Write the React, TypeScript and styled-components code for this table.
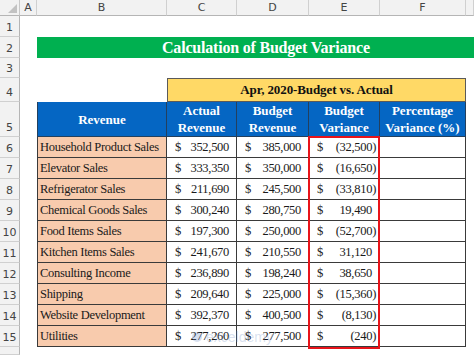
import React from 'react';
import styled, { createGlobalStyle } from 'styled-components';

const GlobalStyle = createGlobalStyle`
    html, body {
        margin: 0;
        padding: 0;
        background: #fff;
    }
`;

const Sheet = styled.div`
    width: 474px;
    height: 355px;
    overflow: hidden;
    display: grid;
    grid-template-columns: 20px 17px 130px 70px 72px 71px 86px 1fr;
    grid-template-rows: 16px 21px 21px 20px 24px 35px repeat(10, 21px) 1fr;
    background: #fff;
    font-family: "Liberation Serif", "Times New Roman", serif;
    color: #1a1a1a;
`;

const Corner = styled.div`
    grid-column: 1;
    grid-row: 1;
    background: #f2f2f2;
    border-right: 1px solid #c8c8c8;
    border-bottom: 1px solid #b5b5b5;
    box-sizing: border-box;
    display: flex;
    align-items: flex-end;
    justify-content: flex-end;
    padding: 0 2px 2px 0;

    &::after {
        content: '';
        width: 0;
        height: 0;
        border-left: 9px solid transparent;
        border-bottom: 9px solid #c2c2c2;
    }
`;

const ColHead = styled.div<{ $col: number }>`
    grid-column: ${p => p.$col};
    grid-row: 1;
    background: #f2f2f2;
    border-right: 1px solid #d0d0d0;
    border-bottom: 1px solid #b5b5b5;
    box-sizing: border-box;
    display: flex;
    align-items: center;
    justify-content: center;
    font-family: "DejaVu Sans", "Liberation Sans", sans-serif;
    font-size: 11px;
    color: #444;
`;

const RowHead = styled.div<{ $row: number }>`
    grid-column: 1;
    grid-row: ${p => p.$row};
    background: #f2f2f2;
    border-right: 1px solid #b5b5b5;
    border-bottom: 1px solid #d0d0d0;
    box-sizing: border-box;
    display: flex;
    align-items: flex-end;
    justify-content: center;
    padding-bottom: 2px;
    font-family: "DejaVu Sans", "Liberation Sans", sans-serif;
    font-size: 11px;
    color: #444;
`;

const TitleBar = styled.div`
    grid-column: 3 / 9;
    grid-row: 3;
    background: #00b050;
    display: flex;
    align-items: center;
    padding-left: 125px;
    font-weight: bold;
    font-size: 16px;
    letter-spacing: -0.2px;
    color: #fff;
    white-space: nowrap;
`;

const Period = styled.div`
    grid-column: 4 / 8;
    grid-row: 5;
    background: #ffd966;
    border: 1px solid #5a5a5a;
    box-sizing: border-box;
    display: flex;
    align-items: center;
    justify-content: center;
    font-weight: bold;
    font-size: 13px;
    letter-spacing: -0.1px;
    color: #111;
`;

const HeadCell = styled.div<{ $col: number }>`
    grid-column: ${p => p.$col};
    grid-row: 6;
    background: #0566c3;
    border-right: 1px solid #23405e;
    border-bottom: 1px solid #23405e;
    border-left: ${p => (p.$col === 3 ? '1px solid #23405e' : 'none')};
    box-sizing: border-box;
    display: flex;
    align-items: center;
    justify-content: center;
    text-align: center;
    font-weight: bold;
    font-size: 13px;
    line-height: 17px;
    color: #fff;
`;

const NameCell = styled.div<{ $row: number }>`
    grid-column: 3;
    grid-row: ${p => p.$row};
    background: #f8cbad;
    border-left: 1px solid #3a3a3a;
    border-right: 1px solid #3a3a3a;
    border-bottom: 1px solid #3a3a3a;
    box-sizing: border-box;
    display: flex;
    align-items: center;
    padding-left: 2px;
    font-size: 12.5px;
    letter-spacing: -0.3px;
    white-space: nowrap;
`;

const MoneyCell = styled.div<{ $row: number; $col: number }>`
    grid-column: ${p => p.$col};
    grid-row: ${p => p.$row};
    background: #fff;
    border-right: 1px solid #3a3a3a;
    border-bottom: 1px solid #3a3a3a;
    box-sizing: border-box;
    display: flex;
    align-items: center;
    justify-content: space-between;
    padding: 0 3px 0 8px;
    font-size: 12.5px;
    letter-spacing: -0.3px;
    white-space: nowrap;
`;

const Amount = styled.span<{ $neg: boolean }>`
    padding-right: ${p => (p.$neg ? '0' : '4px')};
`;

const Highlight = styled.div`
    grid-column: 6;
    grid-row: 7 / 17;
    margin: -1px 0 -2px -1px;
    border: 2px solid #e8141a;
    z-index: 2;
    pointer-events: none;
`;

const Watermark = styled.div`
    grid-column: 4 / 6;
    grid-row: 16;
    align-self: center;
    margin-left: 24px;
    display: flex;
    align-items: center;
    gap: 3px;
    z-index: 3;
    font-family: "Liberation Sans", Arial, sans-serif;
    font-size: 14px;
    color: rgba(120, 150, 200, 0.3);
    pointer-events: none;
`;

const columns = ['A', 'B', 'C', 'D', 'E', 'F', ''];

const rows: [string, number, number, number][] = [
    ['Household Product Sales', 352500, 385000, -32500],
    ['Elevator Sales', 333350, 350000, -16650],
    ['Refrigerator Sales', 211690, 245500, -33810],
    ['Chemical Goods Sales', 300240, 280750, 19490],
    ['Food Items Sales', 197300, 250000, -52700],
    ['Kitchen Items Sales', 241670, 210550, 31120],
    ['Consulting Income', 236890, 198240, 38650],
    ['Shipping', 209640, 225000, -15360],
    ['Website Development', 392370, 400500, -8130],
    ['Utilities', 277260, 277500, -240],
];

const fmt = (n: number) => {
    const s = Math.abs(n).toLocaleString('en-US');
    return n < 0 ? `(${s})` : s;
};

const Money = ({ row, col, value }: { row: number; col: number; value: number }) => (
    <MoneyCell $row={row} $col={col}>
        <span>$</span>
        <Amount $neg={value < 0}>{fmt(value)}</Amount>
    </MoneyCell>
);

const App = () => (
    <>
        <GlobalStyle />
        <Sheet>
            <Corner />
            {columns.map((c, i) => (
                <ColHead key={i} $col={i + 2}>{c}</ColHead>
            ))}
            {Array.from({ length: 16 }, (_, i) => (
                <RowHead key={i} $row={i + 2}>{i < 15 ? i + 1 : ''}</RowHead>
            ))}

            <TitleBar>Calculation of Budget Variance</TitleBar>
            <Period>Apr, 2020-Budget vs. Actual</Period>

            <HeadCell $col={3}>Revenue</HeadCell>
            <HeadCell $col={4}>Actual<br />Revenue</HeadCell>
            <HeadCell $col={5}>Budget<br />Revenue</HeadCell>
            <HeadCell $col={6}>Budget<br />Variance</HeadCell>
            <HeadCell $col={7}>Percentage<br />Variance (%)</HeadCell>

            {rows.map(([name, actual, budget, variance], i) => {
                const r = i + 7;
                return (
                    <React.Fragment key={name}>
                        <NameCell $row={r}>{name}</NameCell>
                        <Money row={r} col={4} value={actual} />
                        <Money row={r} col={5} value={budget} />
                        <Money row={r} col={6} value={variance} />
                        <MoneyCell $row={r} $col={7} />
                    </React.Fragment>
                );
            })}

            <Highlight />
            <Watermark>
                <svg width="12" height="12" viewBox="0 0 12 12">
                    <circle cx="6" cy="6" r="5" fill="rgba(120,150,200,0.3)" />
                </svg>
                exceldemy
            </Watermark>
        </Sheet>
    </>
);

export default App;
